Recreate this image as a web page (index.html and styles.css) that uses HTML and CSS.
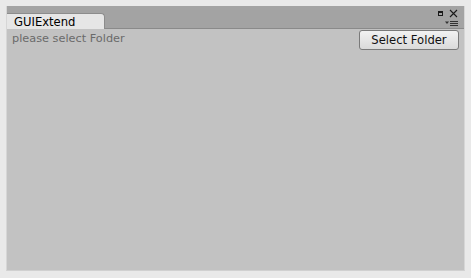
FILE: index.html
```html
<!DOCTYPE html>
<html lang="en">
<head>
  <meta charset="UTF-8">
  <title>GUIExtend</title>
  <link rel="stylesheet" href="styles.css">
</head>
<body>
  <div class="window">
    <div class="titlebar">
      <div class="tab">GUIExtend</div>
      <div class="controls">
        <div class="top-icons">
          <svg width="5" height="5" viewBox="0 0 5 5"><rect x="0.5" y="0.5" width="4" height="4" fill="none" stroke="#1a1a1a"/><rect x="0" y="0" width="5" height="2" fill="#1a1a1a"/></svg>
          <svg width="9" height="9" viewBox="0 0 9 9"><path d="M1 1 L8 8 M8 1 L1 8" stroke="#1a1a1a" stroke-width="1.1"/></svg>
        </div>
        <svg class="menu" width="13" height="7" viewBox="0 0 13 7"><path d="M0 1.5 H4 L2 4 Z" fill="#333"/><path d="M5 1.5 H13 M5 3.5 H13 M5 5.5 H13" stroke="#333" stroke-width="1"/></svg>
      </div>
    </div>
    <div class="content">
      <span class="hint">please select Folder</span>
      <button class="btn">Select Folder</button>
    </div>
  </div>
</body>
</html>
```

FILE: styles.css
```css
html, body {
  margin: 0;
  padding: 0;
}
body {
  background: #e9e9e9;
  width: 471px;
  height: 278px;
  padding: 6px 6px 0 6px;
  box-sizing: border-box;
  font-family: "DejaVu Sans", Verdana, sans-serif;
}
.window {
  height: 264px;
  display: flex;
  flex-direction: column;
  border-left: 1px solid #d6d6d6;
  border-right: 1px solid #d6d6d6;
  border-bottom: 1px solid #d0d0d0;
}
.titlebar {
  height: 22px;
  background: #a3a3a3;
  display: flex;
  align-items: flex-end;
  justify-content: space-between;
  border-bottom: 1px solid #8a8a8a;
}
.tab {
  width: 98px;
  height: 16px;
  margin-bottom: -1px;
  background: #e6e6e6;
  border: 1px solid #8c8c8c;
  border-bottom: none;
  border-left: none;
  border-radius: 0 4px 0 0;
  font-size: 11.6px;
  line-height: 17px;
  color: #000;
  padding-left: 7px;
  box-sizing: border-box;
}
.controls {
  display: flex;
  flex-direction: column;
  align-items: flex-end;
  padding-right: 6px;
  padding-bottom: 1px;
  gap: 2px;
}
.top-icons {
  display: flex;
  align-items: center;
  gap: 6px;
}
.content {
  flex: 1;
  background: #c2c2c2;
  display: flex;
  justify-content: space-between;
  align-items: flex-start;
  padding: 3px 5px 0 5px;
}
.hint {
  font-size: 11.3px;
  color: #6a6a6a;
}
.btn {
  margin-top: -2px;
  width: 100px;
  height: 20px;
  padding: 0;
  font-family: "DejaVu Sans", Verdana, sans-serif;
  font-size: 11.6px;
  color: #111;
  background: linear-gradient(#f2f2f2, #dadada);
  border: 1px solid #7a7a7a;
  border-radius: 3px;
}
```
